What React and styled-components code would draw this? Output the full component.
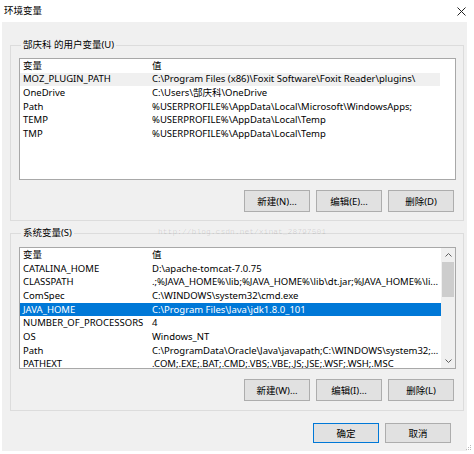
import React from 'react'
import styled, { createGlobalStyle } from 'styled-components'

const GlobalStyle = createGlobalStyle`
  html, body {
    margin: 0;
    padding: 0;
    background: #fff;
  }
  body {
    font-family: "Noto Sans", "Noto Sans CJK SC", sans-serif;
  }
`

const userVars = [
  ['MOZ_PLUGIN_PATH', 'C:\\Program Files (x86)\\Foxit Software\\Foxit Reader\\plugins\\'],
  ['OneDrive', 'C:\\Users\\郜庆科\\OneDrive'],
  ['Path', '%USERPROFILE%\\AppData\\Local\\Microsoft\\WindowsApps;'],
  ['TEMP', '%USERPROFILE%\\AppData\\Local\\Temp'],
  ['TMP', '%USERPROFILE%\\AppData\\Local\\Temp'],
]

const systemVars = [
  ['CATALINA_HOME', 'D:\\apache-tomcat-7.0.75'],
  ['CLASSPATH', '.;%JAVA_HOME%\\lib;%JAVA_HOME%\\lib\\dt.jar;%JAVA_HOME%\\li...'],
  ['ComSpec', 'C:\\WINDOWS\\system32\\cmd.exe'],
  ['JAVA_HOME', 'C:\\Program Files\\Java\\jdk1.8.0_101'],
  ['NUMBER_OF_PROCESSORS', '4'],
  ['OS', 'Windows_NT'],
  ['Path', 'C:\\ProgramData\\Oracle\\Java\\javapath;C:\\WINDOWS\\system32;C:\\...'],
  ['PATHEXT', '.COM;.EXE;.BAT;.CMD;.VBS;.VBE;.JS;.JSE;.WSF;.WSH;.MSC'],
]

const Window = styled.div`
  position: relative;
  width: 474px;
  height: 454px;
  background: #fff;
  display: flex;
  flex-direction: column;
  overflow: hidden;
  font-size: 9.5px;
  color: #000;
`

const TitleBar = styled.div`
  height: 22px;
  flex-shrink: 0;
  display: flex;
  align-items: center;
  justify-content: space-between;
  padding: 0 8px 0 4px;
`

const Title = styled.span`
  font-size: 9.5px;
  line-height: 12px;
`

const Body = styled.div`
  flex: 1;
  margin: 0 7px 3px 2px;
  background: #f0f0f0;
  display: flex;
  flex-direction: column;
  padding: 23px 3px 0 8px;
`

const Group = styled.div`
  border: 1px solid #dcdcdc;
  display: flex;
  flex-direction: column;
  padding: 0 7px ${p => p.$bottom}px 8px;
  margin-top: ${p => p.$top}px;
`

const GroupLabel = styled.div`
  align-self: flex-start;
  margin: -9px 0 0 2px;
  padding: 0 2px;
  height: 16px;
  line-height: 16px;
  background: #f0f0f0;
  font-size: 9.5px;
`

const ListBox = styled.div`
  margin-top: ${p => p.$top}px;
  height: 120px;
  border: 1px solid #a8a8a8;
  background: #fff;
  display: flex;
  overflow: hidden;
`

const ListRows = styled.div`
  flex: 1;
  min-width: 0;
  display: flex;
  flex-direction: column;
  padding-right: ${p => p.$reserve}px;
`

const Row = styled.div`
  height: ${p => p.$h}px;
  flex-shrink: 0;
  display: grid;
  grid-template-columns: 129px minmax(0, 1fr);
  align-items: center;
  white-space: nowrap;
  background: ${p => (p.$selected ? '#0078d7' : p.$hover ? '#f0f0f0' : 'transparent')};
  color: ${p => (p.$selected ? '#fff' : '#000')};
`

const Cell = styled.span`
  padding-left: 3px;
  overflow: hidden;
  text-overflow: ellipsis;
  line-height: 12px;
`

const ScrollBar = styled.div`
  width: 14px;
  flex-shrink: 0;
  background: #f0f0f0;
  display: flex;
  flex-direction: column;
`

const ScrollArrow = styled.div`
  height: 14px;
  flex-shrink: 0;
  display: flex;
  align-items: center;
  justify-content: center;
`

const ScrollTrack = styled.div`
  flex: 1;
  padding: 0 1px;
`

const Thumb = styled.div`
  height: 35px;
  background: #cdcdcd;
`

const ButtonRow = styled.div`
  display: flex;
  justify-content: flex-end;
  gap: ${p => p.$gap}px;
  margin-top: ${p => p.$top}px;
  margin-right: ${p => p.$right}px;
`

const Button = styled.button`
  width: 66px;
  height: ${p => p.$h}px;
  padding: 0;
  margin: 0;
  background: #e1e1e1;
  border: 1px solid ${p => (p.$default ? '#0078d7' : '#adadad')};
  font-family: inherit;
  font-size: 9.5px;
  color: #000;
`

const Watermark = styled.div`
  position: absolute;
  left: 158px;
  top: 227px;
  font-family: "Liberation Mono", monospace;
  font-size: 8px;
  line-height: 10px;
  color: rgba(0, 0, 0, 0.13);
  pointer-events: none;
`

const Grip = styled.svg`
  position: absolute;
  right: 2px;
  bottom: 3px;
`

const Chevron = ({ up }) => (
  <svg width="7" height="4" viewBox="0 0 7 4">
    <path
      d={up ? 'M0.5 3.5 L3.5 0.5 L6.5 3.5' : 'M0.5 0.5 L3.5 3.5 L6.5 0.5'}
      fill="none"
      stroke="#606060"
      strokeWidth="1"
    />
  </svg>
)

const VarList = ({ rows, rowH, top, selected, hover, scroll }) => (
  <ListBox $top={top}>
    <ListRows $reserve={scroll ? 0 : 15}>
      <Row $h={rowH}>
        <Cell>变量</Cell>
        <Cell>值</Cell>
      </Row>
      {rows.map(([name, value]) => (
        <Row key={name + value} $h={rowH} $selected={name === selected} $hover={name === hover}>
          <Cell>{name}</Cell>
          <Cell>{value}</Cell>
        </Row>
      ))}
    </ListRows>
    {scroll && (
      <ScrollBar>
        <ScrollArrow>
          <Chevron up />
        </ScrollArrow>
        <ScrollTrack>
          <Thumb />
        </ScrollTrack>
        <ScrollArrow>
          <Chevron />
        </ScrollArrow>
      </ScrollBar>
    )}
  </ListBox>
)

export default function App() {
  return (
    <>
      <GlobalStyle />
      <Window>
        <TitleBar>
          <Title>环境变量</Title>
          <svg width="9" height="9" viewBox="0 0 9 9">
            <path d="M0.5 0.5 L8.5 8.5 M8.5 0.5 L0.5 8.5" stroke="#222" strokeWidth="1" />
          </svg>
        </TitleBar>
        <Body>
          <Group $top={0} $bottom={8}>
            <GroupLabel>郜庆科 的用户变量(U)</GroupLabel>
            <VarList rows={userVars} rowH={13.6} top={5} hover="MOZ_PLUGIN_PATH" />
            <ButtonRow $gap={6} $top={10} $right={2}>
              <Button $h={22}>新建(N)...</Button>
              <Button $h={22}>编辑(E)...</Button>
              <Button $h={22}>删除(D)</Button>
            </ButtonRow>
          </Group>
          <Group $top={12} $bottom={9}>
            <GroupLabel>系统变量(S)</GroupLabel>
            <VarList rows={systemVars} rowH={13.7} top={6} selected="JAVA_HOME" scroll />
            <ButtonRow $gap={6} $top={10} $right={2}>
              <Button $h={22}>新建(W)...</Button>
              <Button $h={22}>编辑(I)...</Button>
              <Button $h={22}>删除(L)</Button>
            </ButtonRow>
          </Group>
          <ButtonRow $gap={6} $top={12} $right={13}>
            <Button $h={20} $default>确定</Button>
            <Button $h={20}>取消</Button>
          </ButtonRow>
        </Body>
        <Watermark>http://blog.csdn.net/xinat_28797501</Watermark>
        <Grip width="6" height="6" viewBox="0 0 6 6">
          <rect x="4" y="0" width="1" height="1" fill="#bbb" />
          <rect x="2" y="2" width="1" height="1" fill="#bbb" />
          <rect x="4" y="2" width="1" height="1" fill="#bbb" />
          <rect x="0" y="4" width="1" height="1" fill="#bbb" />
          <rect x="2" y="4" width="1" height="1" fill="#bbb" />
          <rect x="4" y="4" width="1" height="1" fill="#bbb" />
        </Grip>
      </Window>
    </>
  )
}
